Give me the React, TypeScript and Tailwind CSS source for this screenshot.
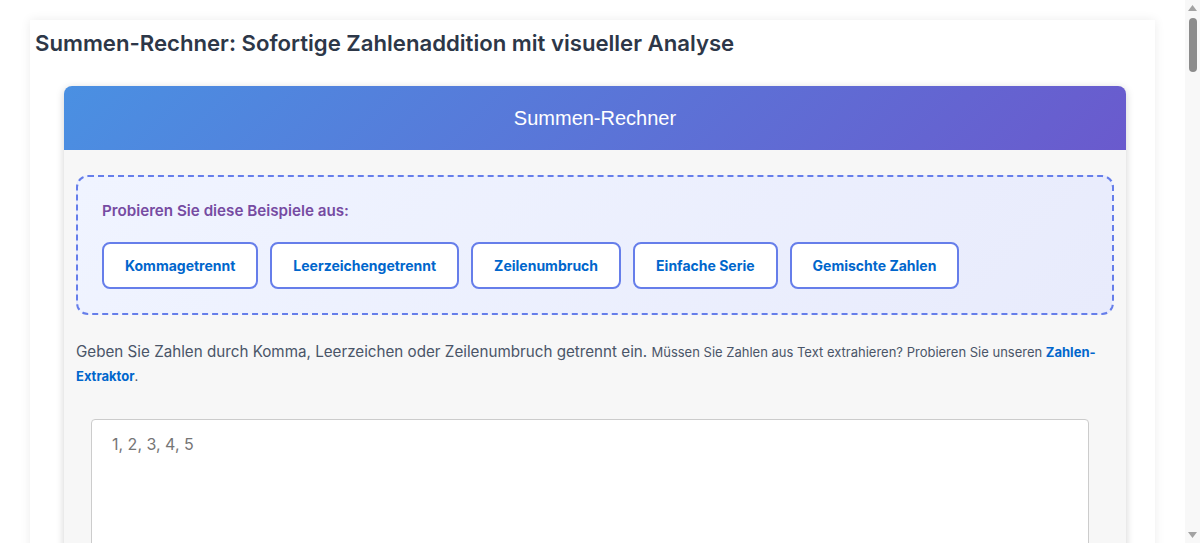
const examples = [
  'Kommagetrennt',
  'Leerzeichengetrennt',
  'Zeilenumbruch',
  'Einfache Serie',
  'Gemischte Zahlen',
];

function FakeScrollbar() {
  return (
    <div className="w-[15px] shrink-0 h-screen sticky top-0 bg-[#f8f8f8] flex flex-col items-center">
      <svg className="mt-[5px] w-[9px] h-[6px]" viewBox="0 0 9 6">
        <path d="M4.5 0L9 6H0z" fill="#a3a3a3" />
      </svg>
      <div className="mt-[7px] w-2 h-[54px] rounded-full bg-[#8c8c8c]" />
      <div className="flex-1" />
      <svg className="mb-[5px] w-[9px] h-[6px]" viewBox="0 0 9 6">
        <path d="M0 0H9L4.5 6z" fill="#a3a3a3" />
      </svg>
    </div>
  );
}

export default function App() {
  return (
    <div className="flex h-screen overflow-hidden bg-white font-['Inter',sans-serif]">
      <div className="flex-1 pt-5 pb-5 px-[30px]">
        <div className="min-h-[5120px] bg-white px-[5px] shadow-[0_0_10px_rgba(0,0,0,0.08)]">
          <h1 className="pt-[9px] text-[22.15px] leading-[28px] font-semibold text-[#2d3748]">
            Summen-Rechner: Sofortige Zahlenaddition mit visueller Analyse
          </h1>

          <div className="mt-[29px] ml-[29px] mr-[24px] rounded-lg overflow-hidden bg-[#f7f7f7] shadow-[0_2px_8px_rgba(0,0,0,0.18)]">
            <div className="h-16 flex items-center justify-center bg-[linear-gradient(135deg,#4a90e2,#6a5acd)]">
              <span className="text-white text-[20px] font-['Liberation_Sans',Arial,sans-serif]">
                Summen-Rechner
              </span>
            </div>

            <div className="px-3 pt-[25px] pb-10">
              <div className="rounded-xl border-2 border-dashed border-[#667eea] bg-[linear-gradient(135deg,#f0f4ff,#e8ebfc)] p-6">
                <p className="text-[15.2px] leading-5 font-semibold text-[#764ba2] mb-[21px]">
                  Probieren Sie diese Beispiele aus:
                </p>
                <div className="flex flex-wrap gap-3">
                  {examples.map((label) => (
                    <button
                      key={label}
                      className="bg-white border-2 border-[#667eea] rounded-lg px-[21px] py-3 text-[14px] leading-[19px] font-bold text-[#0066cc]"
                    >
                      {label}
                    </button>
                  ))}
                </div>
              </div>

              <p className="mt-[25px] text-[15.2px] leading-6 text-[#4a5568]">
                Geben Sie Zahlen durch Komma, Leerzeichen oder Zeilenumbruch getrennt ein.{' '}
                <span className="text-[13px]">
                  Müssen Sie Zahlen aus Text extrahieren? Probieren Sie unseren{' '}
                  <a href="#" className="font-bold text-[#0066cc]">Zahlen-Extraktor</a>.
                </span>
              </p>

              <textarea
                className="block mt-[31px] ml-[15px] w-[998px] h-[200px] rounded border border-[#ccc] bg-white px-5 pt-[14px] text-[16px] leading-5 text-[#333] placeholder:text-[#757575] resize-none outline-none"
                placeholder="1, 2, 3, 4, 5"
              />
            </div>
          </div>
        </div>
      </div>
      <FakeScrollbar />
    </div>
  );
}
